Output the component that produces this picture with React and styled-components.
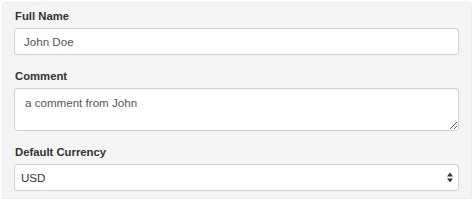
import React from 'react'
import styled, { createGlobalStyle } from 'styled-components'

const GlobalStyle = createGlobalStyle`
  html, body {
    margin: 0;
    padding: 0;
    background: #fff;
  }
  body {
    font-family: "Liberation Sans", Arial, Helvetica, sans-serif;
    color: #333;
  }
`

const Page = styled.div`
  padding: 2px 2px 0 2px;
`

const Well = styled.form`
  background: #f4f4f4;
  border: 1px solid #ececec;
  border-radius: 2px;
  padding: 5px 12px 7px 11px;
  display: flex;
  flex-direction: column;
  gap: 13px;
  width: 470px;
  box-sizing: border-box;
`

const Group = styled.div`
  display: flex;
  flex-direction: column;
  gap: 4px;
`

const Label = styled.label`
  font-size: 11.3px;
  font-weight: bold;
  line-height: 16px;
  color: #333;
  padding-left: 1px;
`

const controlBase = `
  box-sizing: border-box;
  width: 100%;
  border: 1px solid #d2d2d2;
  border-radius: 3px;
  background: #fff;
  font-family: "Liberation Sans", Arial, Helvetica, sans-serif;
  font-size: 11.6px;
  color: #555;
  box-shadow: inset 0 1px 1px rgba(0, 0, 0, 0.05);
  outline: none;
  margin: 0;
`

const TextInput = styled.input`
  ${controlBase}
  height: 27px;
  padding: 0 9px;
`

const TextArea = styled.textarea`
  ${controlBase}
  height: 43px;
  padding: 6px 10px;
  line-height: 16px;
  resize: vertical;
  display: block;
`

const SelectWrap = styled.div`
  position: relative;
`

const Select = styled.select`
  ${controlBase}
  height: 27px;
  padding: 0 24px 0 6px;
  appearance: none;
  -webkit-appearance: none;
  color: #333;
`

const Arrows = styled.svg`
  position: absolute;
  right: 5px;
  top: 8px;
  pointer-events: none;
`

export default function App() {
  return (
    <>
      <GlobalStyle />
      <Page>
        <Well onSubmit={(e) => e.preventDefault()}>
          <Group>
            <Label htmlFor="fullName">Full Name</Label>
            <TextInput id="fullName" type="text" defaultValue="John Doe" />
          </Group>
          <Group>
            <Label htmlFor="comment">Comment</Label>
            <TextArea id="comment" defaultValue="a comment from John" />
          </Group>
          <Group>
            <Label htmlFor="currency">Default Currency</Label>
            <SelectWrap>
              <Select id="currency" defaultValue="USD">
                <option value="USD">USD</option>
                <option value="EUR">EUR</option>
                <option value="GBP">GBP</option>
              </Select>
              <Arrows width="8" height="11" viewBox="0 0 8 11">
                <path d="M4 0.5 L7 4.5 L1 4.5 Z" fill="#333" />
                <path d="M4 10.5 L7 6.5 L1 6.5 Z" fill="#333" />
              </Arrows>
            </SelectWrap>
          </Group>
        </Well>
      </Page>
    </>
  )
}
